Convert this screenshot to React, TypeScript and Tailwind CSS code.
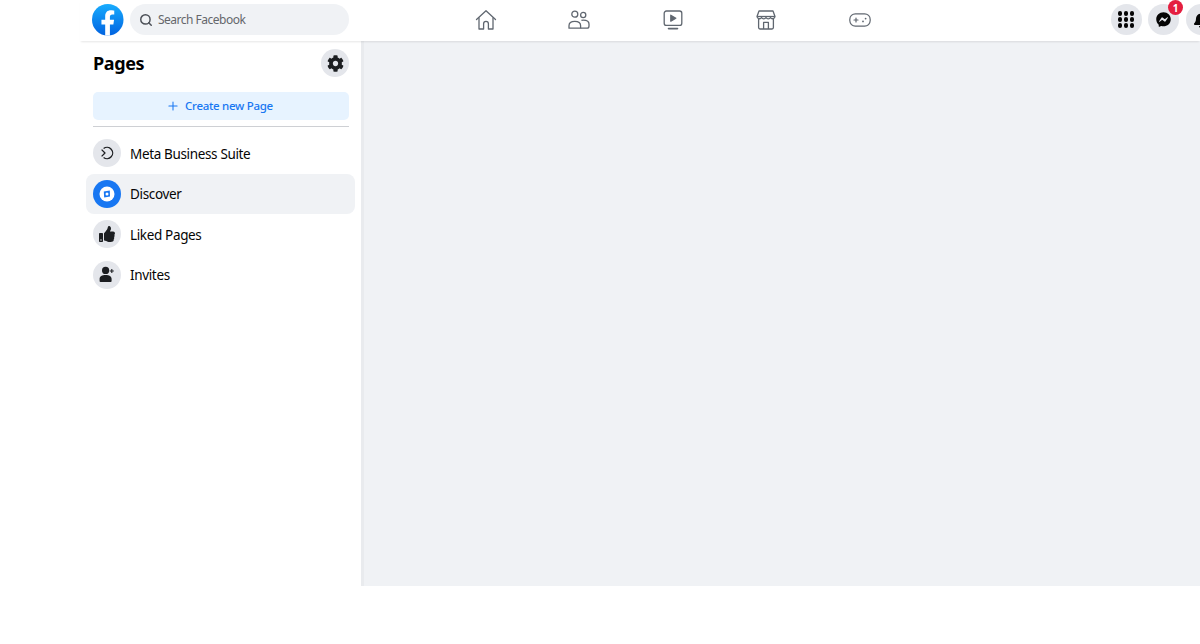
import { Plus, Search } from "lucide-react";
import { FaBell, FaCog, FaFacebookMessenger, FaThumbsUp } from "react-icons/fa";

function Logo() {
  return (
    <svg width="31.5" height="31.5" viewBox="0 0 32 32" className="shrink-0">
      <defs>
        <linearGradient id="fb" x1="0" y1="0" x2="0" y2="1">
          <stop offset="0" stopColor="#18acfe" />
          <stop offset="1" stopColor="#0163e0" />
        </linearGradient>
      </defs>
      <circle cx="16" cy="16" r="16" fill="url(#fb)" />
      <path
        d="M13.4 32V20.7H9.6v-4.7h3.8v-3.5c0-4 2.3-6.1 5.8-6.1 1.7 0 3.4.3 3.4.3v3.9h-1.9c-1.9 0-2.5 1.2-2.5 2.4V16h4.2l-.7 4.7h-3.5V32z"
        fill="#fff"
      />
    </svg>
  );
}

function HomeIcon() {
  return (
    <svg width="22" height="22" viewBox="0 0 22 22" fill="none" stroke="#606770" strokeWidth="1.3" strokeLinejoin="round">
      <path d="M1.5 10.5 11 1.8l9.5 8.7" strokeLinecap="round" />
      <path d="M4 8.5V20h4.6v-5.2a2.4 2.4 0 0 1 4.8 0V20H18V8.5" />
    </svg>
  );
}

function FriendsIcon() {
  return (
    <svg width="22" height="20" viewBox="0 0 22 20" fill="none" stroke="#606770" strokeWidth="1.3">
      <circle cx="6.8" cy="4.2" r="3" />
      <circle cx="15.2" cy="5" r="2.6" />
      <path d="M1 18.2v-2.4c0-2.7 2.2-4.4 5.8-4.4s5.8 1.7 5.8 4.4v2.4z" strokeLinejoin="round" />
      <path d="M13.4 10.4c.6-.2 1.2-.3 1.9-.3 3.2 0 5.7 1.5 5.7 4v1.9c0 1.3-.8 2.2-2 2.2h-6.4" strokeLinejoin="round" />
    </svg>
  );
}

function WatchIcon() {
  return (
    <svg width="20" height="20" viewBox="0 0 20 20" fill="none" stroke="#606770" strokeWidth="1.3">
      <rect x="1.2" y="1" width="17.6" height="14.4" rx="2.2" />
      <path d="M7.8 5.2v6l5-3z" fill="#606770" strokeLinejoin="round" />
      <path d="M5.5 18.6h9" strokeWidth="1.6" strokeLinecap="round" />
    </svg>
  );
}

function MarketIcon() {
  return (
    <svg width="20" height="20" viewBox="0 0 20 20" fill="none" stroke="#606770" strokeWidth="1.3" strokeLinejoin="round">
      <path d="M3 1h14l2 5.5a2.4 2.4 0 0 1-4.5 1 2.6 2.6 0 0 1-4.5 0 2.6 2.6 0 0 1-4.5 0A2.4 2.4 0 0 1 1 6.5z" />
      <path d="M1 6.5h18" />
      <path d="M2.6 9v8.6a1.4 1.4 0 0 0 1.4 1.4h12a1.4 1.4 0 0 0 1.4-1.4V9" />
      <path d="M7.6 19v-6.6h4.8V19" />
    </svg>
  );
}

function GamingIcon() {
  return (
    <svg width="22" height="14" viewBox="0 0 22 14" fill="none" stroke="#606770" strokeWidth="1.2">
      <rect x="0.8" y="0.8" width="20.4" height="12.4" rx="5.6" />
      <path d="M5 7h4M7 5v4" strokeLinecap="round" />
      <circle cx="14" cy="8.4" r="0.9" fill="#606770" stroke="none" />
      <circle cx="16.6" cy="5.6" r="0.9" fill="#606770" stroke="none" />
    </svg>
  );
}

function MenuDots() {
  return (
    <div className="grid grid-cols-3 gap-[1.5px]">
      {Array.from({ length: 9 }).map((_, i) => (
        <span key={i} className="h-[4.5px] w-[4.5px] rounded-full bg-[#050505]" />
      ))}
    </div>
  );
}

function MetaIcon() {
  return (
    <svg width="14" height="14" viewBox="0 0 14 14" fill="none" stroke="#1c1e21" strokeWidth="1.3" strokeLinejoin="round">
      <path d="M3.6 2.6A5.6 5.6 0 1 1 3.6 11.4" />
      <path d="M1.6 3.6 5 7 1.6 10.4" />
    </svg>
  );
}

function DiscoverIcon() {
  return (
    <svg width="16" height="16" viewBox="0 0 16 16">
      <circle cx="8" cy="8" r="7.5" fill="#fff" />
      <path d="M4.8 5.6 10.8 4.6 11 10.4 5.2 11.4z" fill="#1877f2" />
      <circle cx="8" cy="8" r="1.5" fill="#fff" />
    </svg>
  );
}

function InviteIcon() {
  return (
    <svg width="16" height="17" viewBox="0 0 16 17" fill="#1c1e21">
      <circle cx="6.6" cy="4.4" r="3.6" />
      <path d="M0.6 15.2v-2.4c0-2.3 2.4-3.8 6-3.8s6 1.5 6 3.8v2.4c0 .5-.4.8-.9.8H1.5c-.5 0-.9-.3-.9-.8z" />
      <path d="M12.8 3v4M10.8 5h4" stroke="#1c1e21" strokeWidth="1.1" fill="none" />
    </svg>
  );
}

const navIcons = [
  <HomeIcon key="home" />,
  <FriendsIcon key="friends" />,
  <WatchIcon key="watch" />,
  <MarketIcon key="market" />,
  <GamingIcon key="gaming" />,
];

const links = [
  { label: "Meta Business Suite", icon: <MetaIcon />, circle: "bg-[#e4e6eb]" },
  { label: "Discover", icon: <DiscoverIcon />, circle: "bg-[#1877f2]", active: true },
  { label: "Liked Pages", icon: <FaThumbsUp size={16} className="text-[#1c1e21]" />, circle: "bg-[#e4e6eb]" },
  { label: "Invites", icon: <InviteIcon />, circle: "bg-[#e4e6eb]" },
];

export default function App() {
  return (
    <div className="h-[644px] w-[1200px] overflow-hidden bg-white pl-[80px] font-['Noto_Sans',sans-serif] text-[#050505]">
      <div className="flex h-[586px] flex-col">
        <header className="relative z-10 flex h-[41px] shrink-0 items-start pl-[12px] pt-[4px] shadow-[0_2px_2px_-1px_rgba(0,0,0,0.1)]">
          <Logo />
          <div className="ml-[6.5px] flex h-[31px] w-[219px] shrink-0 items-center gap-[5px] rounded-full bg-[#f0f2f5] pl-[9px] text-[12px] tracking-[-0.5px] text-[#65676b]">
            <Search size={14} strokeWidth={2.5} className="text-[#4b4f56]" />
            Search Facebook
          </div>
          <nav className="ml-[90px] flex h-[32px] shrink-0">
            {navIcons.map((icon) => (
              <div key={icon.key} className="flex h-full w-[93.5px] items-center justify-center">
                {icon}
              </div>
            ))}
          </nav>
          <div className="ml-[204px] flex shrink-0 gap-[6.5px]">
            <div className="flex h-[31px] w-[31px] items-center justify-center rounded-full bg-[#e4e6eb]">
              <MenuDots />
            </div>
            <div className="relative flex h-[31px] w-[31px] items-center justify-center rounded-full bg-[#e4e6eb]">
              <FaFacebookMessenger size={15} />
              <span className="absolute -right-[4px] -top-[4px] flex h-[15px] w-[15px] items-center justify-center rounded-full bg-[#e41e3f] text-[10px] font-bold leading-none text-white">
                1
              </span>
            </div>
            <div className="flex h-[31px] w-[31px] items-center justify-center rounded-full bg-[#e4e6eb]">
              <FaBell size={16} />
            </div>
          </div>
        </header>

        <div className="flex min-h-0 flex-1">
          <aside className="w-[281px] shrink-0 px-[6px]">
            <div className="ml-[7px] mr-[6px] flex items-center justify-between pt-[8px]">
              <h1 className="text-[18px] font-bold leading-[28px] tracking-[-0.4px] text-black">Pages</h1>
              <div className="flex h-[28px] w-[28px] items-center justify-center rounded-full bg-[#e4e6eb]">
                <FaCog size={17} className="text-[#1c1e21]" />
              </div>
            </div>
            <div className="ml-[7px] mr-[6px] mt-[15px] flex h-[28px] items-center justify-center gap-[5px] rounded-[5px] bg-[#e7f3ff] pr-[3px] text-[11.5px] font-medium tracking-[-0.3px] text-[#1877f2]">
              <Plus size={14} strokeWidth={1.8} />
              Create new Page
            </div>
            <div className="mb-[6px] ml-[7px] mr-[6px] mt-[6px] h-px bg-[#ced0d4]" />
            <ul>
              {links.map((link) => (
                <li
                  key={link.label}
                  className={`flex h-[40.5px] items-center gap-[9px] rounded-[8px] px-[7px] text-[13.5px] tracking-[-0.35px] ${link.active ? "bg-[#f0f2f5]" : ""}`}
                >
                  <span className={`flex h-[28px] w-[28px] shrink-0 items-center justify-center rounded-full ${link.circle}`}>
                    {link.icon}
                  </span>
                  <span className="pt-[1px]">{link.label}</span>
                </li>
              ))}
            </ul>
          </aside>
          <main className="flex-1 border-l-[3px] border-[#e9ebee] bg-[#f0f2f5]" />
        </div>
      </div>
    </div>
  );
}
